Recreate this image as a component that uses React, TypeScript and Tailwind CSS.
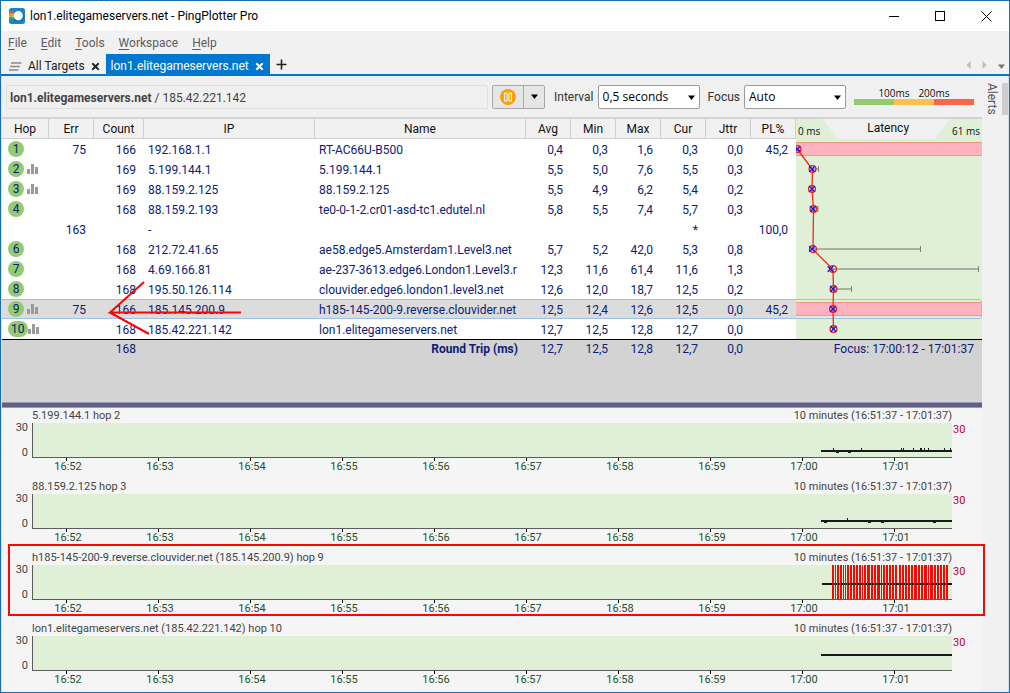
import React from 'react';
import {useState} from 'react';
import {FaTimes} from 'react-icons/fa';

const hops = [
  { hop: '1', graph: false, err: '75', count: '166', ip: '192.168.1.1', name: 'RT-AC66U-B500', stats: ['0,4', '0,3', '1,6', '0,3', '0,0', '45,2'] },
  { hop: '2', graph: true, err: '', count: '169', ip: '5.199.144.1', name: '5.199.144.1', stats: ['5,5', '5,0', '7,6', '5,5', '0,3', ''] },
  { hop: '3', graph: true, err: '', count: '169', ip: '88.159.2.125', name: '88.159.2.125', stats: ['5,5', '4,9', '6,2', '5,4', '0,2', ''] },
  { hop: '4', graph: false, err: '', count: '168', ip: '88.159.2.193', name: 'te0-0-1-2.cr01-asd-tc1.edutel.nl', stats: ['5,8', '5,5', '7,4', '5,7', '0,3', ''] },
  { hop: '', graph: false, err: '163', count: '', ip: '-', name: '', stats: ['', '', '', '*', '', '100,0'] },
  { hop: '6', graph: false, err: '', count: '168', ip: '212.72.41.65', name: 'ae58.edge5.Amsterdam1.Level3.net', stats: ['5,7', '5,2', '42,0', '5,3', '0,8', ''] },
  { hop: '7', graph: false, err: '', count: '168', ip: '4.69.166.81', name: 'ae-237-3613.edge6.London1.Level3.r', stats: ['12,3', '11,6', '61,4', '11,6', '1,3', ''] },
  { hop: '8', graph: false, err: '', count: '168', ip: '195.50.126.114', name: 'clouvider.edge6.london1.level3.net', stats: ['12,6', '12,0', '18,7', '12,5', '0,2', ''] },
  { hop: '9', graph: true, err: '75', count: '166', ip: '185.145.200.9', name: 'h185-145-200-9.reverse.clouvider.net', stats: ['12,5', '12,4', '12,6', '12,5', '0,0', '45,2'] },
  { hop: '10', graph: true, err: '', count: '168', ip: '185.42.221.142', name: 'lon1.elitegameservers.net', stats: ['12,7', '12,5', '12,8', '12,7', '0,0', ''] },
];

const statHeads = ['Avg', 'Min', 'Max', 'Cur', 'Jttr', 'PL%'];

// x = average, cur = current, max = end of the whisker
const points = [
  { x: 1.5, cur: 1.5, y: 10.5, max: 0 },
  { x: 16.5, cur: 16, y: 30.5, max: 22.5 },
  { x: 16, cur: 16, y: 50.5, max: 0 },
  { x: 17.5, cur: 17, y: 70.5, max: 22 },
  { x: 17, cur: 16, y: 110.5, max: 124.5 },
  { x: 37, cur: 34.5, y: 130.5, max: 182.5 },
  { x: 37.5, cur: 37, y: 150.5, max: 55.5 },
  { x: 37, cur: 37, y: 170.5, max: 0 },
  { x: 37.5, cur: 37.5, y: 190.5, max: 0 },
];

const times = ['16:52', '16:53', '16:54', '16:55', '16:56', '16:57', '16:58', '16:59', '17:00', '17:01'];

const charts = [
  { title: '5.199.144.1 hop 2', line: 28, up: [12, 40, 80, 82, 92, 99, 100, 103, 107, 123, 129], down: [16, 28], loss: false },
  { title: '88.159.2.125 hop 3', line: 27, up: [26], down: [4, 48, 61, 113], loss: false },
  { title: 'h185-145-200-9.reverse.clouvider.net (185.145.200.9) hop 9', line: 19, up: [], down: [], loss: true },
  { title: 'lon1.elitegameservers.net (185.42.221.142) hop 10', line: 19, up: [], down: [], loss: false },
];

// widths of the loss bars and the gap after each of them
const lossBars = [
  [2, 1], [1, 1], [2, 1], [2, 1], [1, 1], [1, 1], [2, 1], [2, 1], [2, 1], [2, 1], [2, 1], [1, 1], [2, 1], [3, 1],
  [2, 1], [2, 1], [3, 1], [1, 1], [2, 1], [2, 1], [2, 1], [2, 1], [2, 2], [2, 1], [2, 1], [2, 1], [2, 1], [2, 1],
  [3, 1], [2, 1], [2, 1], [3, 1], [1, 1], [3, 1], [2, 1], [2, 1], [2, 1], [2, 1], [2, 0],
];

const AppLogo = () => (
  <svg width="16" height="16" viewBox="0 0 16 16" aria-hidden="true">
    <rect width="16" height="16" rx="2.5" fill="#1689c4" />
    <path d="M0 3 L5 3 L5 5.5 L0 5.5 Z" fill="#e8553c" />
    <path d="M0 5.5 L5 5.5 L5 7.5 L0 7.5 Z" fill="#f5a623" />
    <path d="M0 7.5 L5 7.5 L5 9.5 L0 9.5 Z" fill="#b5c94a" />
    <path d="M0 9.5 L5 9.5 L5 11.5 L0 11.5 Z" fill="#35a37c" />
    <path d="M5 13.8 L5 8 A5.2 5.2 0 1 1 9 13.4 Z" fill="#0f6fa8" />
    <circle cx="9.3" cy="7.7" r="4.7" fill="#fff" />
  </svg>
);

const BarsIcon = () => (
  <svg className="shrink-0" width="12" height="10" viewBox="0 0 12 10" fill="#999" aria-hidden="true">
    <rect x="0" y="5" width="3" height="5" />
    <rect x="4" y="0" width="3" height="10" />
    <rect x="8" y="3" width="3" height="7" />
  </svg>
);

const Caret = ({className = ''}) => (
  <svg className={className} width="7" height="5" viewBox="0 0 7 5" aria-hidden="true">
    <path d="M0 0.5 H7 L3.5 5 Z" fill="currentColor" />
  </svg>
);

const Picker = ({id, label, value, setValue, options}) => (
  <div className="flex items-center gap-1">
    <label htmlFor={id} className="text-[#333]">{label}</label>
    <div className="relative">
      <select
        id={id}
        value={value}
        onChange={e => setValue(e.target.value)}
        className="block h-6 w-[102px] appearance-none rounded-xs border border-[#9c9c9c] bg-white pl-1 font-['Open_Sans',sans-serif] text-[12px] text-black"
      >
        {options.map(o => <option key={o}>{o}</option>)}
      </select>
      <Caret className="pointer-events-none absolute top-[10px] right-[5px] text-black" />
    </div>
  </div>
);

const LatencyGraph = () => (
  <svg className="block" width="186" height="200" viewBox="0 0 186 200" aria-label="Latency per hop">
    {[3, 163].map(y => (
      <g key={y}>
        <rect x="0" y={y} width="186" height="14" fill="#ffb3be" />
        <path d={`M0 ${y + 0.5} H186 M0 ${y + 13.5} H186`} stroke="#f0977c" />
      </g>
    ))}
    <path d="M0 160.5 H184 L185.5 162 V178 L184 179.5 H0" fill="none" stroke="#9cc0ee" />
    {points.filter(p => p.max > 0).map(p => (
      <g key={p.y}>
        <path d={`M${p.x} ${p.y - 0.5} H${p.max}`} stroke="#a9b0a6" strokeWidth="2" />
        <path d={`M${p.max} ${p.y - 3.5} V${p.y + 2.5}`} stroke="#808080" />
      </g>
    ))}
    <polyline points={points.map(p => `${p.x},${p.y}`).join(' ')} fill="none" stroke="#f5261c" strokeWidth="1.3" />
    {points.map(p => (
      <g key={p.y} fill="none">
        <circle cx={p.x} cy={p.y - 0.5} r="3.4" stroke="#f01818" strokeWidth="1.3" />
        <path d={`M${p.cur - 2.8} ${p.y - 3.3} l5.6 5.6 m0 -5.6 l-5.6 5.6`} stroke="#1616e8" strokeWidth="1.3" />
      </g>
    ))}
  </svg>
);

const HopTable = () => (
  <div className="relative">
    <table className="w-full table-fixed border-separate border-spacing-0 bg-white text-[#0c2074]">
      <colgroup>
        <col className="w-[47px]" />
        <col className="w-[45px]" />
        <col className="w-[50px]" />
        <col className="w-[171px]" />
        <col />
        {statHeads.map(h => <col key={h} className="w-[45px]" />)}
        <col className="w-[186px]" />
      </colgroup>
      <thead className="bg-[#f1f1f1] text-[#111]">
        <tr className="leading-[17px]">
          {['Hop', 'Err', 'Count', 'IP', 'Name', ...statHeads].map(h => (
            <th key={h} className="border-r border-b border-[#cfcfcf] p-0 pt-[2px] font-normal">{h}</th>
          ))}
          <th className="relative bg-[#dff0d6] p-0 font-normal">
            <svg className="absolute top-0 left-0" width="186" height="20" viewBox="0 0 186 20" aria-hidden="true">
              <path d="M27 0 H154 L139 20 H42 Z" fill="#f1f1f1" />
            </svg>
            <div className="relative flex items-center justify-between px-[2px]">
              <span className="pt-1 font-['Open_Sans',sans-serif] text-[10px] leading-4">0 ms</span>
              <span className="pb-[2px] pl-1">Latency</span>
              <span className="pt-1 font-['Open_Sans',sans-serif] text-[10px] leading-4">61 ms</span>
            </div>
          </th>
        </tr>
      </thead>
      <tbody className="leading-[18px]">
        {hops.map((h, i) => (
          <tr key={i} className={h.hop === '9' ? 'h-5 bg-[#dcdcdc] [&>td]:shadow-[inset_0_1px_#9cc0ee,inset_0_-1px_#9cc0ee]' : 'h-5'}>
            <td className="p-0">
              <div className="flex h-5 items-center pl-[6px]">
                {h.hop && <span className="h-4 min-w-4 rounded-full bg-[#93cb70] px-[3px] text-center leading-[17px]">{h.hop}</span>}
                {h.graph && <span className={h.hop === '10' ? '' : 'pl-[3px]'}><BarsIcon /></span>}
              </div>
            </td>
            <td className="p-0 pt-[2px] pr-2 text-right">{h.err}</td>
            <td className="p-0 pt-[2px] pr-2 text-right">{h.count}</td>
            <td className="p-0 pt-[2px] pl-1">{h.ip}</td>
            <td className="p-0 pt-[2px] pl-1 whitespace-nowrap">{h.name}</td>
            {h.stats.map((s, j) => <td key={j} className="p-0 pt-[2px] pr-2 text-right">{s}</td>)}
            {i === 0 && (
              <td rowSpan={10} className="bg-[#dff0d6] p-0"><LatencyGraph /></td>
            )}
          </tr>
        ))}
      </tbody>
      <tfoot>
        <tr className="bg-[#d3d3d3] leading-[19px] [&>td]:border-t [&>td]:border-black">
          <td className="p-0" colSpan={2}></td>
          <td className="p-0 pr-2 text-right">168</td>
          <td className="p-0 pr-2 text-right font-bold" colSpan={2}>Round Trip (ms)</td>
          {['12,7', '12,5', '12,8', '12,7', '0,0', ''].map((s, j) => <td key={j} className="p-0 pr-2 text-right">{s}</td>)}
          <td className="p-0 pr-2 text-right">Focus: 17:00:12 - 17:01:37</td>
        </tr>
      </tfoot>
    </table>
    {/* arrow pointing at the packet loss on hop 9 */}
    <svg className="pointer-events-none absolute top-[160px] left-[104px]" width="140" height="60" viewBox="0 0 140 60" aria-hidden="true">
      <path d="M135 33.5 H4 L38 3 M4 33.5 L43 55" fill="none" stroke="#fb0505" strokeWidth="2" />
    </svg>
  </div>
);

const TimeChart = ({chart}) => {
  let x = 11;
  const bars = lossBars.map(([w, gap]) => {
    const bar = { x: x, w: w };
    x += w + gap;
    return bar;
  });

  return (
    <section className="relative h-[71px] text-[11px] text-[#444]">
      <div className="flex h-[15px] justify-between pr-[30px] pl-[30px] leading-4">
        <h2>{chart.title}</h2>
        <span>10 minutes (16:51:37 - 17:01:37)</span>
      </div>
      <div className="flex h-[35px] leading-[10px]">
        <div className="flex w-[30px] flex-col justify-between pr-1 text-right">
          <span>30</span>
          <span>0</span>
        </div>
        <div className="flex flex-1 justify-end border-b border-l border-[#5c5c5c] bg-[#dff0d6]">
          <svg width="131" height="34" viewBox="0 0 131 34" shapeRendering="crispEdges" aria-hidden="true">
            {chart.loss && bars.map(b => <rect key={b.x} x={b.x} y="0" width={b.w} height="34" fill="#fb0505" />)}
            {chart.loss
              ? <path d={`M1 ${chart.line} H131`} stroke="#181818" strokeWidth="2" />
              : <path d={`M0 ${chart.line} H131`} stroke="#181818" strokeWidth="2" />}
            {chart.loss && bars.map(b => <rect key={b.x} x={b.x} y={chart.line - 1} width="1" height="2" fill="#fb0505" />)}
            {chart.up.map(u => <rect key={u} x={u} y={chart.line - 3} width="1" height="2" fill="#181818" />)}
            {chart.down.map(d => <rect key={d} x={d - 1} y={chart.line + 1} width="3" height="1" fill="#181818" />)}
          </svg>
        </div>
        <div className="w-[30px] pt-[2px] pl-px text-[#c00028]">30</div>
      </div>
      <div className="flex pr-10 pl-5 leading-3 text-[#24502a]">
        {times.map(t => (
          <div key={t} className="flex flex-1 flex-col items-center">
            <span className="mr-[3px] h-[3px] w-px bg-black"></span>
            <span>{t}</span>
          </div>
        ))}
      </div>
      {chart.loss && <div className="pointer-events-none absolute -top-[6px] -right-[3px] bottom-[5px] left-[6px] border-2 border-[#fb0505]"></div>}
    </section>
  );
};

export default function App() {
  const [interval, setPingInterval] = useState('0,5 seconds');
  const [focus, setFocus] = useState('Auto');

  return (
    <div className="flex min-h-screen flex-col border border-[#1a6fb5] bg-[#f1f1f1] font-[Roboto,sans-serif] text-[12px] leading-4">
      <header className="flex h-[30px] items-center bg-white pl-2 text-black">
        <AppLogo />
        <h1 className="flex-1 pl-[5px]">lon1.elitegameservers.net - PingPlotter Pro</h1>
        <div className="flex">
          <button aria-label="Minimize" className="flex h-[29px] w-[46px] items-center justify-center">
            <svg width="11" height="11" viewBox="0 0 11 11"><path d="M0 5.5 H10" stroke="#000" /></svg>
          </button>
          <button aria-label="Maximize" className="flex h-[29px] w-[46px] items-center justify-center">
            <svg width="10" height="10" viewBox="0 0 10 10"><rect x="0.5" y="0.5" width="9" height="9" fill="none" stroke="#000" /></svg>
          </button>
          <button aria-label="Close" className="flex h-[29px] w-[46px] items-center justify-center">
            <svg width="11" height="11" viewBox="0 0 11 11"><path d="M0.5 0.5 L10.5 10.5 M10.5 0.5 L0.5 10.5" stroke="#000" /></svg>
          </button>
        </div>
      </header>

      <nav className="flex h-[23px] items-center gap-[14px] pl-[7px] text-[#5c5c5c]">
        {['File', 'Edit', 'Tools', 'Workspace', 'Help'].map(m => (
          <button key={m}><span className="underline underline-offset-2">{m[0]}</span>{m.slice(1)}</button>
        ))}
      </nav>

      <div className="flex h-[22px] items-stretch border-b-2 border-[#0078d0] text-[#222]">
        <div className="flex items-center pt-1 pr-[5px] pl-2">
          <svg width="13" height="9" viewBox="0 0 13 9" aria-hidden="true">
            <path d="M2 1 H12.5 M1 4.5 H11 M0 8 H9.5" stroke="#8a8a8a" strokeWidth="1.3" />
          </svg>
          <button className="pl-[6px]">All Targets</button>
          <button aria-label="Close All Targets" className="pl-[5px]"><FaTimes size={11} /></button>
        </div>
        <div className="flex items-center bg-[#0078d0] pt-1 pr-[5px] pl-[5px] text-white">
          <button>lon1.elitegameservers.net</button>
          <button aria-label="Close lon1.elitegameservers.net" className="pl-[5px]"><FaTimes size={11} /></button>
        </div>
        <button aria-label="New tab" className="pl-[6px]">
          <svg width="11" height="11" viewBox="0 0 11 11"><path d="M5.5 0.5 V10.5 M0.5 5.5 H10.5" stroke="#222" strokeWidth="1.6" /></svg>
        </button>
        <div className="flex flex-1 items-center justify-end gap-[11px] pt-[2px] pr-1 text-[#bcbcbc]">
          <button aria-label="Previous tab"><svg width="5" height="8" viewBox="0 0 5 8"><path d="M4.5 0 V8 L0.5 4 Z" fill="currentColor" /></svg></button>
          <button aria-label="Next tab"><svg width="5" height="8" viewBox="0 0 5 8"><path d="M0.5 0 V8 L4.5 4 Z" fill="currentColor" /></svg></button>
          <button aria-label="Tab list" className="pt-[2px] text-[#777]"><Caret /></button>
        </div>
      </div>

      <div className="flex flex-1 border-x border-[#dcdcdc]">
        <main className="flex min-w-0 flex-1 flex-col">
          <div className="flex h-[43px] items-center border-b-2 border-[#d3d3d3] bg-[#f0f0f0] pr-2 pl-1">
            <div className="mr-1 flex h-6 flex-1 items-center rounded-xs border border-[#e0e0e0] pt-[2px] pl-[3px] whitespace-pre text-[#444]">
              <strong>lon1.elitegameservers.net</strong> / 185.42.221.142
            </div>
            <div className="mr-[9px] flex h-6 rounded-xs border border-[#a8a8a8] bg-[#e6e6e6]">
              <button aria-label="Pause" className="flex w-[31px] items-center justify-center border-r border-[#a8a8a8]">
                <svg width="16" height="16" viewBox="0 0 16 16">
                  <circle cx="8" cy="8" r="8" fill="#faa20a" />
                  <path d="M4.5 4 H7 V12 H4.5 Z M9 4 H11.5 V12 H9 Z" fill="#faa20a" stroke="#fff" />
                </svg>
              </button>
              <button aria-label="Pause options" className="flex w-5 items-center justify-center text-black"><Caret /></button>
            </div>
            <div className="flex gap-2">
              <Picker id="interval" label="Interval" value={interval} setValue={setPingInterval} options={['0,5 seconds', '1 second', '2,5 seconds', '5 seconds']} />
              <Picker id="focus" label="Focus" value={focus} setValue={setFocus} options={['Auto', 'All', '60 seconds', '10 minutes']} />
            </div>
            <div className="ml-2 w-[120px] pb-[2px]">
              <div className="flex justify-around px-5 font-['Open_Sans',sans-serif] text-[10px] leading-3 text-[#111]">
                <span>100ms</span>
                <span>200ms</span>
              </div>
              <div className="flex h-[6px]">
                <span className="flex-1 bg-[#93cb70]"></span>
                <span className="flex-1 bg-[#ffc04f]"></span>
                <span className="flex-1 bg-[#fb654c]"></span>
              </div>
            </div>
          </div>

          <HopTable />
          <div className="h-[43px] bg-[#d3d3d3]"></div>
          <div className="h-[6px] border-y border-[#9b9ab8] bg-[#605f88]"></div>

          <div className="flex-1 bg-[#f5f5f5]">
            {charts.map(c => <TimeChart key={c.title} chart={c} />)}
          </div>
        </main>

        <aside className="flex w-[26px] items-start justify-between pt-[7px]">
          <button className="flex h-8 w-full items-center justify-between pl-[2px] text-[#555]">
            <span className="[writing-mode:vertical-rl]">Alerts</span>
            <span className="h-8 w-[6px] bg-[#cdcdcd]"></span>
          </button>
        </aside>
      </div>
    </div>
  );
}
